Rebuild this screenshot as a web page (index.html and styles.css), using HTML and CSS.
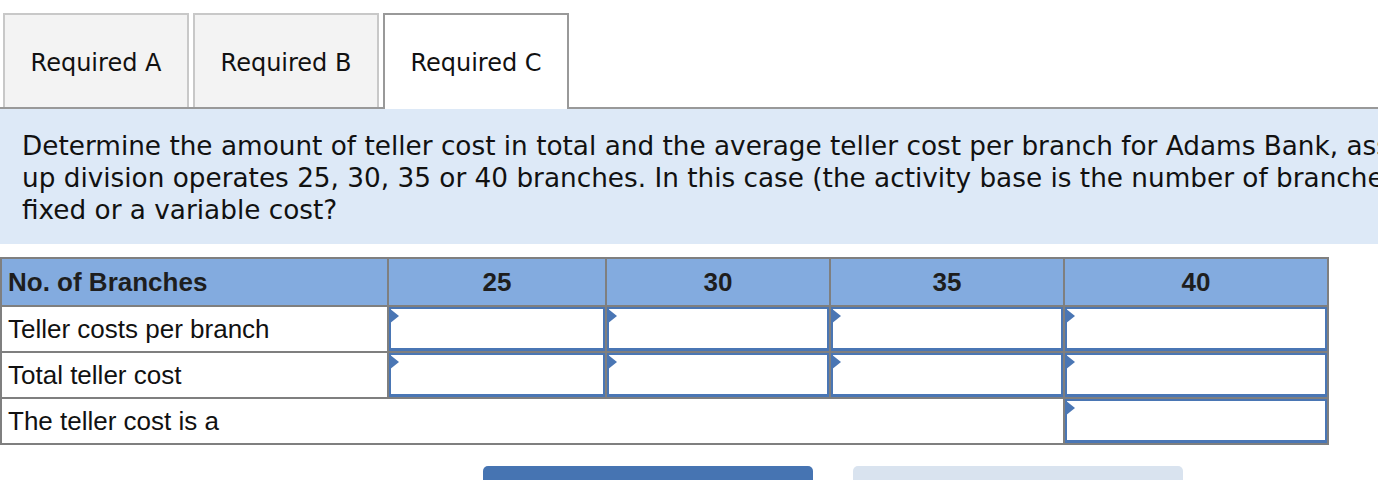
FILE: index.html
```html
<!DOCTYPE html>
<html lang="en">
<head>
    <meta charset="UTF-8">
    <meta name="viewport" content="width=device-width, initial-scale=1.0">
    <title>Required C</title>
    <link rel="stylesheet" href="styles.css">
</head>
<body>

    <div class="page">
        <div class="tabs">
            <button class="tab">Required A</button>
            <button class="tab">Required B</button>
            <button class="tab tab-active">Required C</button>
        </div>

        <div class="question">
            <p>Determine the amount of teller cost in total and the average teller cost per branch for Adams Bank, assuming the start-<br>up division operates 25, 30, 35 or 40 branches. In this case (the activity base is the number of branches), is teller cost a fixed or a variable cost?</p>
        </div>

        <table class="answer">
            <colgroup>
                <col class="col-label">
                <col class="col-25">
                <col class="col-30">
                <col class="col-35">
                <col class="col-40">
            </colgroup>
            <thead>
                <tr>
                    <th class="label">No. of Branches</th>
                    <th>25</th>
                    <th>30</th>
                    <th>35</th>
                    <th>40</th>
                </tr>
            </thead>
            <tbody>
                <tr>
                    <td class="label">Teller costs per branch</td>
                    <td class="input-cell"><div class="input"></div></td>
                    <td class="input-cell"><div class="input"></div></td>
                    <td class="input-cell"><div class="input"></div></td>
                    <td class="input-cell"><div class="input"></div></td>
                </tr>
                <tr>
                    <td class="label">Total teller cost</td>
                    <td class="input-cell"><div class="input"></div></td>
                    <td class="input-cell"><div class="input"></div></td>
                    <td class="input-cell"><div class="input"></div></td>
                    <td class="input-cell"><div class="input"></div></td>
                </tr>
                <tr>
                    <td class="label" colspan="4">The teller cost is a</td>
                    <td class="input-cell"><div class="input"></div></td>
                </tr>
            </tbody>
        </table>

        <div class="nav">
            <button class="nav-btn nav-prev">&lt; Required B</button>
            <button class="nav-btn nav-next">Required C &gt;</button>
        </div>
    </div>

</body>
</html>
```

FILE: styles.css
```css
html, body {
    overflow: hidden;
}

body {
    margin: 0;
    padding: 0;
    background-color: #fff;
    color: #111;
}

.page {
    width: 1666px;
}

/* tab strip */
.tabs {
    display: flex;
    align-items: flex-start;
    gap: 4px;
    padding: 13px 0 0 3px;
    border-bottom: 2px solid #999;
}

.tab {
    width: 186px;
    height: 94px;
    box-sizing: border-box;
    border: 2px solid #c8c8c8;
    border-bottom: none;
    background-color: #f3f3f3;
    font-family: "DejaVu Sans", Verdana, sans-serif;
    font-size: 24px;
    color: #111;
    padding: 4px 0 0;
    cursor: pointer;
}

.tab-active {
    height: 96px;
    margin-bottom: -2px;
    padding-bottom: 2px;
    border-color: #999;
    background-color: #fff;
}

/* question text */
.question {
    background-color: #dde9f7;
    padding: 21px 22px 18px;
}

.question p {
    margin: 0;
    font-family: "DejaVu Sans", Verdana, sans-serif;
    font-size: 26.3px;
    line-height: 32px;
    color: #111;
}

/* answer grid */
.answer {
    margin-top: 13px;
    border-collapse: collapse;
    table-layout: fixed;
    width: 1329px;
    border: 2px solid #7f7f7f;
    font-family: "Liberation Sans", Arial, sans-serif;
    font-size: 26px;
}

.col-label { width: 387px; }
.col-25 { width: 218px; }
.col-30 { width: 224px; }
.col-35 { width: 234px; }
.col-40 { width: 264px; }

.answer th,
.answer td {
    border: 2px solid #7f7f7f;
    padding: 0;
}

.answer th {
    height: 46px;
    background-color: #83abdf;
    color: #1e1e1e;
    font-weight: bold;
    text-align: center;
}

.answer td {
    height: 44px;
}

.answer .label {
    text-align: left;
    padding-left: 6px;
}

.input-cell {
    vertical-align: top;
}

.input {
    position: relative;
    height: 44px;
    box-sizing: border-box;
    border: 2px solid #4a76b4;
    border-bottom-width: 3px;
    background-color: #fff;
}

/* little flag marking an entry field */
.input::before {
    content: "";
    position: absolute;
    top: -1px;
    left: -2px;
    border-left: 10px solid #4a76b4;
    border-top: 8px solid transparent;
    border-bottom: 8px solid transparent;
}

/* prev / next */
.nav {
    display: flex;
    justify-content: center;
    gap: 40px;
    margin-top: 21px;
}

.nav-btn {
    width: 330px;
    height: 56px;
    border: none;
    border-radius: 5px 5px 0 0;
    font-family: "DejaVu Sans", Verdana, sans-serif;
    font-size: 20px;
    padding-top: 14px;
    cursor: pointer;
}

.nav-prev {
    background-color: #4674b2;
    color: #fff;
}

.nav-next {
    background-color: #d9e3ef;
    color: #8a9bb0;
}
```
